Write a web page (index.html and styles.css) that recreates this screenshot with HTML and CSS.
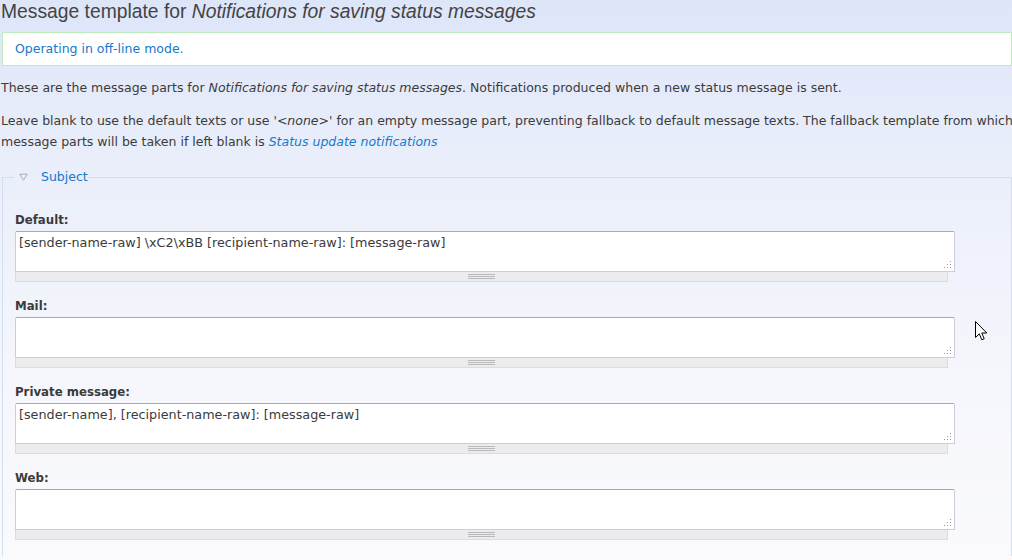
FILE: index.html
```html
<!DOCTYPE html>
<html>
<head>
<meta charset="utf-8">
<link rel="stylesheet" href="styles.css">
</head>
<body>
<h1 class="title">Message template for <em>Notifications for saving status messages</em></h1>
<div class="messages">Operating in off-line mode.</div>
<p class="desc">These are the message parts for <em>Notifications for saving status messages</em>. Notifications produced when a new status message is sent.</p>
<p class="desc">Leave blank to use the default texts or use '<em>&lt;none&gt;</em>' for an empty message part, preventing fallback to default message texts. The fallback template from which message parts will be taken if left blank is <a class="link" href="#"><em>Status update notifications</em></a></p>
<fieldset class="fs">
  <legend class="fs-legend"><svg class="tri" width="9" height="8" viewBox="0 0 9 8"><path d="M0.8 1.2 H8.2 L4.5 7.2 Z" fill="none" stroke="#a9acb4" stroke-width="1"/></svg><span class="fs-title">Subject</span></legend>
  <div class="item">
    <label class="lbl">Default:</label>
    <div class="ta-wrap">
      <div class="ta">[sender-name-raw] \xC2\xBB [recipient-name-raw]: [message-raw]<span class="handle"></span></div>
      <div class="grip"><span class="grip-lines"></span></div>
    </div>
  </div>
  <div class="item">
    <label class="lbl">Mail:</label>
    <div class="ta-wrap">
      <div class="ta"><span class="handle"></span></div>
      <div class="grip"><span class="grip-lines"></span></div>
    </div>
  </div>
  <div class="item">
    <label class="lbl">Private message:</label>
    <div class="ta-wrap">
      <div class="ta">[sender-name], [recipient-name-raw]: [message-raw]<span class="handle"></span></div>
      <div class="grip"><span class="grip-lines"></span></div>
    </div>
  </div>
  <div class="item">
    <label class="lbl">Web:</label>
    <div class="ta-wrap">
      <div class="ta"><span class="handle"></span></div>
      <div class="grip"><span class="grip-lines"></span></div>
    </div>
  </div>
</fieldset>
<svg class="cursor" width="14" height="22" viewBox="0 0 14 22"><path d="M0.5 0.5 V16.5 L4.3 12.8 L6.8 18.8 L9.2 17.8 L6.8 12 H11.8 Z" fill="#fff" stroke="#000" stroke-width="1" stroke-linejoin="miter"/></svg>
</body>
</html>
```
FILE: styles.css
```css
html, body {
  margin: 0;
  padding: 0;
}
body {
  position: relative;
  width: 1012px;
  height: 560px;
  overflow: hidden;
  padding: 0 0 0 2px;
  box-sizing: border-box;
  font-family: "DejaVu Sans", Verdana, sans-serif;
  font-size: 12.5px;
  color: #3b3b3b;
  background: linear-gradient(to bottom, #dde5f9 0px, #e7ecfa 120px, #eff2fb 250px, #f6f7fc 400px, #fafafc 560px);
}
.title {
  margin: 0 0 0 -1px;
  height: 32px;
  font-family: "Liberation Sans", Arial, sans-serif;
  font-weight: normal;
  font-size: 19.3px;
  line-height: 24px;
  color: #444;
  white-space: nowrap;
}
.messages {
  background: #fff;
  border: 1px solid #bdecbd;
  padding: 8px 12px;
  line-height: 16px;
  color: #1479cc;
}
.desc {
  margin: 11px -8px 12px -1px;
  line-height: 21px;
}
.link {
  color: #1479cc;
  text-decoration: none;
}
.fs {
  margin: 17px 0 0 0;
  padding: 27px 12px 0 12px;
  border: 1px solid #d3dff0;
  border-bottom: none;
  min-width: 0;
}
.fs-legend {
  margin-left: -1px;
  padding: 0 0 0 5px;
  display: flex;
  align-items: center;
  line-height: 16px;
}
.tri {
  display: block;
  margin-right: 13px;
}
.fs-title {
  color: #1479cc;
}
.item {
  margin-bottom: 16px;
}
.lbl {
  display: block;
  font-weight: bold;
  font-size: 11.75px;
  line-height: 16px;
  margin-bottom: 3px;
}
.ta-wrap {
  width: 940px;
}
.ta {
  position: relative;
  height: 35px;
  padding: 3px 3px 1px 3px;
  background: #fff;
  border: 1px solid #ccd;
  border-top-color: #a8a8b0;
  border-radius: 2px 2px 0 0;
  font-size: 12.75px;
  line-height: 16px;
  box-sizing: content-box;
  width: 932px;
}
.handle {
  position: absolute;
  right: 3px;
  bottom: 3px;
  width: 8px;
  height: 8px;
  background-image: radial-gradient(circle, #9a9aa0 0.8px, transparent 1px);
  background-size: 3px 3px;
  clip-path: polygon(100% 0, 100% 100%, 0 100%);
}
.grip {
  width: 931px;
  height: 9px;
  background: #ececee;
  border: 1px solid #dcdcde;
  border-top: none;
  display: flex;
  justify-content: center;
  align-items: center;
}
.grip-lines {
  width: 27px;
  height: 5px;
  background: repeating-linear-gradient(to bottom, #b9b9bb 0, #b9b9bb 1px, transparent 1px, transparent 2px);
}
.cursor {
  position: absolute;
  left: 975px;
  top: 321px;
}
```
